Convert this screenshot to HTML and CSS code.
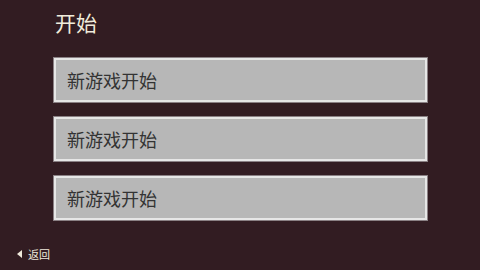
FILE: index.html
```html
<!DOCTYPE html>
<html lang="zh">
<head>
<meta charset="utf-8">
<link rel="stylesheet" href="styles.css">
</head>
<body>
<div class="screen">
  <h1 class="title">开始</h1>
  <div class="list">
    <div class="btn">新游戏开始</div>
    <div class="btn">新游戏开始</div>
    <div class="btn">新游戏开始</div>
  </div>
  <div class="back"><span class="tri"></span><span>返回</span></div>
</div>
</body>
</html>
```
FILE: styles.css
```css
* { box-sizing: border-box; }
html, body { margin: 0; padding: 0; }
body {
  width: 480px; height: 270px; overflow: hidden;
  background: #321c22;
  font-family: "Noto Sans CJK SC", "Noto Sans", sans-serif;
}
.screen {
  height: 270px;
  display: flex; flex-direction: column;
  padding: 8px 0 0 54px;
}
.title {
  margin: 0 0 0 1px;
  font-size: 21px; font-weight: 400; line-height: 28px;
  color: #f1ecdc;
}
.list {
  margin-top: 22px;
  display: flex; flex-direction: column; gap: 15px;
  width: 373px;
}
.btn {
  height: 44px;
  background: #b7b7b7;
  border: 2px solid #e6e6e6;
  box-shadow: 0 0 0 1px #8a8084;
  color: #333;
  font-size: 18px; line-height: 40px;
  padding-left: 11px;
}
.back {
  margin: auto 0 8px -37px;
  display: flex; align-items: center; gap: 6px;
  color: #efe9dc; font-size: 11px; line-height: 16px;
}
.tri {
  width: 0; height: 0;
  border-top: 4px solid transparent;
  border-bottom: 4px solid transparent;
  border-right: 5px solid #efe9dc;
}
```
